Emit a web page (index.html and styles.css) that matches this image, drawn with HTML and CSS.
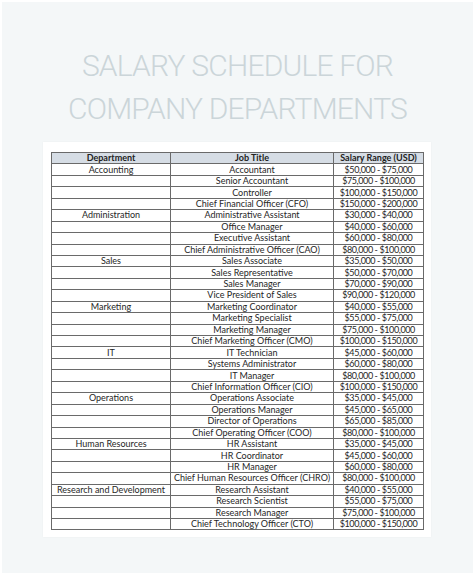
FILE: index.html
```html
<!DOCTYPE html>
<html>
<head>
<meta charset="utf-8">
<link rel="stylesheet" href="styles.css">
</head>
<body>
<div class="frame">
  <h1 class="title">SALARY SCHEDULE FOR<br>COMPANY DEPARTMENTS</h1>
  <div class="card">
    <table class="sheet">
      <colgroup><col class="c1"><col class="c2"><col class="c3"></colgroup>
      <thead>
        <tr><th>Department</th><th>Job Title</th><th>Salary Range (USD)</th></tr>
      </thead>
      <tbody>
        <tr><td>Accounting</td><td>Accountant</td><td>$50,000 - $75,000</td></tr>
        <tr><td></td><td>Senior Accountant</td><td>$75,000 - $100,000</td></tr>
        <tr><td></td><td>Controller</td><td>$100,000 - $150,000</td></tr>
        <tr><td></td><td>Chief Financial Officer (CFO)</td><td>$150,000 - $200,000</td></tr>
        <tr><td>Administration</td><td>Administrative Assistant</td><td>$30,000 - $40,000</td></tr>
        <tr><td></td><td>Office Manager</td><td>$40,000 - $60,000</td></tr>
        <tr><td></td><td>Executive Assistant</td><td>$60,000 - $80,000</td></tr>
        <tr><td></td><td>Chief Administrative Officer (CAO)</td><td>$80,000 - $100,000</td></tr>
        <tr><td>Sales</td><td>Sales Associate</td><td>$35,000 - $50,000</td></tr>
        <tr><td></td><td>Sales Representative</td><td>$50,000 - $70,000</td></tr>
        <tr><td></td><td>Sales Manager</td><td>$70,000 - $90,000</td></tr>
        <tr><td></td><td>Vice President of Sales</td><td>$90,000 - $120,000</td></tr>
        <tr><td>Marketing</td><td>Marketing Coordinator</td><td>$40,000 - $55,000</td></tr>
        <tr><td></td><td>Marketing Specialist</td><td>$55,000 - $75,000</td></tr>
        <tr><td></td><td>Marketing Manager</td><td>$75,000 - $100,000</td></tr>
        <tr><td></td><td>Chief Marketing Officer (CMO)</td><td>$100,000 - $150,000</td></tr>
        <tr><td>IT</td><td>IT Technician</td><td>$45,000 - $60,000</td></tr>
        <tr><td></td><td>Systems Administrator</td><td>$60,000 - $80,000</td></tr>
        <tr><td></td><td>IT Manager</td><td>$80,000 - $100,000</td></tr>
        <tr><td></td><td>Chief Information Officer (CIO)</td><td>$100,000 - $150,000</td></tr>
        <tr><td>Operations</td><td>Operations Associate</td><td>$35,000 - $45,000</td></tr>
        <tr><td></td><td>Operations Manager</td><td>$45,000 - $65,000</td></tr>
        <tr><td></td><td>Director of Operations</td><td>$65,000 - $85,000</td></tr>
        <tr><td></td><td>Chief Operating Officer (COO)</td><td>$80,000 - $100,000</td></tr>
        <tr><td>Human Resources</td><td>HR Assistant</td><td>$35,000 - $45,000</td></tr>
        <tr><td></td><td>HR Coordinator</td><td>$45,000 - $60,000</td></tr>
        <tr><td></td><td>HR Manager</td><td>$60,000 - $80,000</td></tr>
        <tr><td></td><td>Chief Human Resources Officer (CHRO)</td><td>$80,000 - $100,000</td></tr>
        <tr><td>Research and Development</td><td>Research Assistant</td><td>$40,000 - $55,000</td></tr>
        <tr><td></td><td>Research Scientist</td><td>$55,000 - $75,000</td></tr>
        <tr><td></td><td>Research Manager</td><td>$75,000 - $100,000</td></tr>
        <tr><td></td><td>Chief Technology Officer (CTO)</td><td>$100,000 - $150,000</td></tr>
      </tbody>
    </table>
  </div>
</div>
</body>
</html>
```

FILE: styles.css
```css
html, body {
  margin: 0;
  padding: 0;
  background: #ffffff;
}
.frame {
  margin: 2px 1px 0 2px;
  height: 571px;
  background: #f4f7f8;
  overflow: hidden;
}
.title {
  margin: 0;
  padding-top: 42px;
  height: 98px;
  text-align: center;
  font-family: "Roboto", sans-serif;
  font-weight: 300;
  font-size: 30px;
  line-height: 43px;
  color: #cbd5d9;
  letter-spacing: -0.8px;
}
.card {
  margin: 0 0 0 41px;
  width: 372px;
  padding: 10px 8px 7px 8px;
  background: #ffffff;
  box-shadow: 0 0 2px rgba(0,0,0,0.04);
}
.sheet {
  width: 372px;
  border-collapse: collapse;
  table-layout: fixed;
  font-family: "Lato", sans-serif;
  font-size: 9px;
  color: #262626;
}
.c1 { width: 119px; }
.c2 { width: 163px; }
.c3 { width: 90px; }
.sheet th, .sheet td {
  border: 1px solid #6a6a6a;
  height: 10.45px;
  padding: 0;
  line-height: 10px;
  text-align: center;
  white-space: nowrap;
  overflow: hidden;
}
.sheet td:nth-child(3) {
  letter-spacing: -0.4px;
}
.sheet th {
  background: #d6dde5;
  font-weight: 700;
  color: #222;
}
```
